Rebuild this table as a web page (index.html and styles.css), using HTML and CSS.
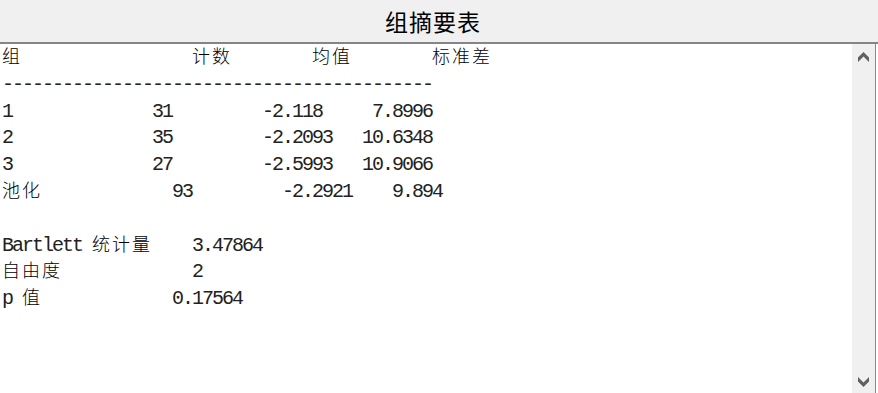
FILE: index.html
```html
<!DOCTYPE html>
<html lang="zh-CN">
<head>
<meta charset="utf-8">
<title>组摘要表</title>
<link rel="stylesheet" href="styles.css">
</head>
<body>
<div class="window">
  <header class="titlebar"><h1 class="title">组摘要表</h1></header>
  <div class="panel">
    <pre class="output"><span class="cjk">组</span>                 <span class="cjk">计数</span>        <span class="cjk">均值</span>        <span class="cjk">标准差</span>
-------------------------------------------
1              31         -2.118     7.8996
2              35         -2.2093   10.6348
3              27         -2.5993   10.9066
<span class="cjk">池化</span>             93         -2.2921    9.894

Bartlett <span class="cjk">统计量</span>    3.47864
<span class="cjk">自由度</span>             2
p <span class="cjk">值</span>             0.17564</pre>
    <div class="scrollbar">
      <div class="arrow arrow-up">
        <svg width="11" height="10" viewBox="0 0 11 10"><polygon points="5.5,0 11,5.5 11,10 5.5,4.5 0,10 0,5.5" fill="#606060"/></svg>
      </div>
      <div class="track"></div>
      <div class="arrow arrow-down">
        <svg width="11" height="10" viewBox="0 0 11 10"><polygon points="5.5,10 11,4.5 11,0 5.5,5.5 0,0 0,4.5" fill="#606060"/></svg>
      </div>
    </div>
  </div>
</div>
</body>
</html>
```

FILE: styles.css
```css
html, body {
  margin: 0;
  padding: 0;
  background: #ffffff;
}

.window {
  width: 878px;
  height: 393px;
  display: flex;
  flex-direction: column;
  overflow: hidden;
}

.titlebar {
  height: 42px;
  flex: none;
  background: #f0f0f0;
  border-bottom: 2px solid #858585;
  display: flex;
  align-items: center;
  justify-content: center;
  padding-right: 12px;
}

.title {
  margin: 0;
  font-family: "Noto Sans CJK SC", sans-serif;
  font-weight: 400;
  font-size: 23px;
  letter-spacing: 1px;
  color: #000;
  line-height: 1;
}

.panel {
  flex: 1;
  display: flex;
  min-height: 0;
}

.output {
  flex: 1;
  margin: 0;
  padding: 1px 0 0 2px;
  font-family: "Liberation Mono", monospace;
  font-size: 20px;
  letter-spacing: -2px;
  line-height: 26.8px;
  color: #222;
  overflow: hidden;
}

.cjk {
  font-family: "Noto Sans CJK SC", sans-serif;
  font-size: 18px;
  font-weight: 300;
  letter-spacing: 2px;
  line-height: 18px;
  color: #000;
}

.scrollbar {
  width: 23px;
  flex: none;
  background: #f0f0f0;
  border-right: 1px solid #8a8a8a;
  margin-right: 2px;
  display: flex;
  flex-direction: column;
}

.arrow {
  height: 22px;
  display: flex;
  align-items: center;
  justify-content: center;
}

.arrow-up {
  padding-top: 2px;
}

.arrow-down {
  height: 22px;
}

.track {
  flex: 1;
}
```
